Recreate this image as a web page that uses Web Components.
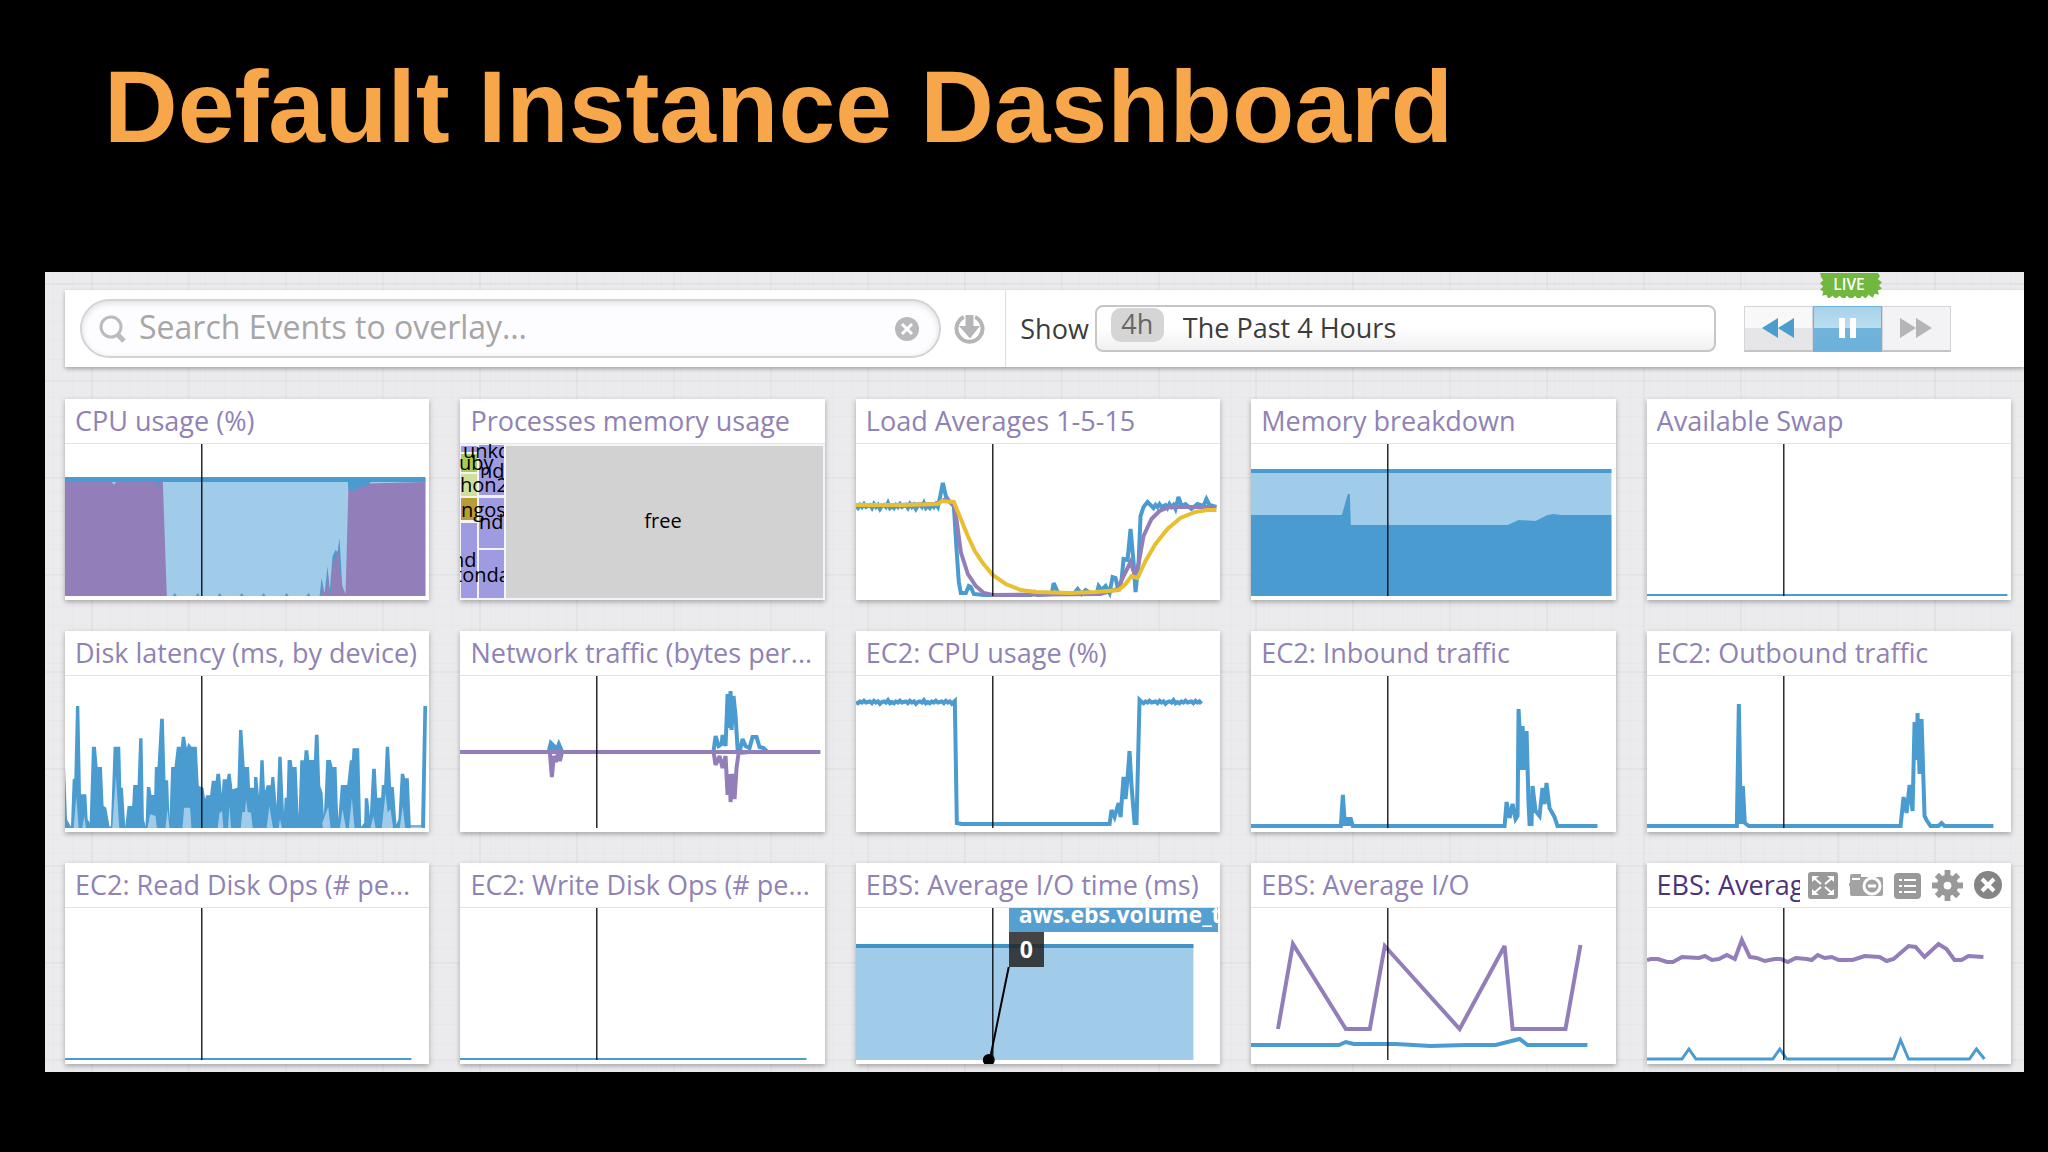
<!DOCTYPE html>
<html lang="en">
<head>
<meta charset="utf-8">
<title>Default Instance Dashboard</title>
<style>
body{
    margin: 0;
    background-color: #000;
    font-family: 'Open Sans', 'Noto Sans', sans-serif;
}
</style>
</head>
<body>
<dashboard-slide>
    <span slot="title">Default Instance Dashboard</span>
    <event-toolbar slot="toolbar"></event-toolbar>
    <graph-card heading="CPU usage (%)"><time-chart name="cpu"></time-chart></graph-card>
    <graph-card heading="Processes memory usage"><process-treemap></process-treemap></graph-card>
    <graph-card heading="Load Averages 1-5-15"><time-chart name="load"></time-chart></graph-card>
    <graph-card heading="Memory breakdown"><time-chart name="memory"></time-chart></graph-card>
    <graph-card heading="Available Swap"><time-chart name="swap"></time-chart></graph-card>
    <graph-card heading="Disk latency (ms, by device)"><time-chart name="disk"></time-chart></graph-card>
    <graph-card heading="Network traffic (bytes per..."><time-chart name="network"></time-chart></graph-card>
    <graph-card heading="EC2: CPU usage (%)"><time-chart name="ec2cpu"></time-chart></graph-card>
    <graph-card heading="EC2: Inbound traffic"><time-chart name="inbound"></time-chart></graph-card>
    <graph-card heading="EC2: Outbound traffic"><time-chart name="outbound"></time-chart></graph-card>
    <graph-card heading="EC2: Read Disk Ops (# pe..."><time-chart name="diskops"></time-chart></graph-card>
    <graph-card heading="EC2: Write Disk Ops (# pe..."><time-chart name="diskops"></time-chart></graph-card>
    <graph-card heading="EBS: Average I/O time (ms)">
        <time-chart name="iotime"><chart-tooltip metric="aws.ebs.volume_t" value="0"></chart-tooltip></time-chart>
    </graph-card>
    <graph-card heading="EBS: Average I/O"><time-chart name="io"></time-chart></graph-card>
    <graph-card heading="EBS: Averag" active><time-chart name="iosize"></time-chart></graph-card>
</dashboard-slide>

<script>
const BLUE = '#4a9bcf'
const LIGHT = '#a0ccea'
const PURPLE = '#927eb9'
const YELLOW = '#e8bf2f'

// small repeatable noise for the flat parts of a series
function noise(from, to, y, amp){
    const steps = [0, 2, -1, 1, -2, 1, 0, -1, 2, -2, 1, -1, 3, 0, -1, 1, -3, 2]
    let out = ''
    for(let x = from, i = 0; x <= to; x += 2, i++){
        out += `${x},${y + steps[i % steps.length] * amp} `
    }
    return out
}
function line(points, color, width = 4){
    return `<polyline points="${points}" fill="none" stroke="${color}" stroke-width="${width}" stroke-linejoin="miter" stroke-miterlimit="3"/>`
}
function area(points, color){
    return `<polygon points="${points}" fill="${color}"/>`
}

const charts = {
    cpu: {
        body: area('0,38 361,38 361,152 0,152', LIGHT)
            + area('255,152 257,134 260,150 263,122 265,150 268,112 271,106 273,108 275,94 278,148 280,152', BLUE)
            + area('0,38 98,38 102,152 0,152', PURPLE)
            + area('256,152 258,142 261,152 263,126 266,152 268,122 270,115 272,112 274,104 277,140 281,150 284,40 361,38 361,152', PURPLE)
            + area('283,34 361,34 361,38 306,38 303,42 294,43 291,47 284,46', BLUE)
            + area('0,33 361,33 361,38 0,38', BLUE)
            + area('47,38 51,38 49,41', LIGHT) + area('92,38 95,38 94,42', BLUE)
            + [110, 133, 155, 177, 199, 222, 244].map(x => area(`${x - 2},152 ${x},149 ${x + 2},152`, BLUE)).join('')
    },
    load: {
        body: line(noise(0, 82, 62, 1) + '84,54 87,39 90,52 94,58 98,62 101,110 103,138 105,149 110,149 113,142 115,143 118,150 128,151 175,151 179,148 182,151 196,150 198,139 202,148 206,150 218,150 222,145 226,150 230,146 236,150 241,150 243,142 246,146 250,142 254,149 257,133 260,134 263,147 266,136 268,115 272,116 275,85 278,118 280,148 283,120 285,72 288,63 292,58 ' + noise(296, 320, 62, 1) + '323,53 326,62 330,60 336,65 342,60 348,62 351,55 354,61 361,63', BLUE)
            + line('0,62 80,60 86,57 90,55 98,60 101,78 105,108 112,130 120,142 128,149 137,151 245,150 262,145 268,132 275,118 279,130 283,120 288,92 296,75 304,67 314,63 361,63', PURPLE)
            + line('0,61 50,61 82,60 86,57 98,58 105,75 112,92 119,107 127,119 137,131 150,140 165,146 180,148 215,149 240,148 263,146 270,140 276,132 282,134 290,117 300,100 312,85 325,74 340,68 352,66 361,66', YELLOW)
    },
    memory: {
        body: area('0,25 361,25 361,152 0,152', LIGHT)
            + area('0,25 361,25 361,29 0,29', BLUE)
            + area('0,71 91,71 97,50 99,50 100,81 257,81 268,76 285,77 297,71 303,70 310,71 361,71 361,152 0,152', BLUE)
    },
    swap: { body: line('0,151 361,151', BLUE, 2) },
    disk: {
        view: '44 170 1095 468',
        body: area('44,440 50,600 62,622 67,480 72,478 77,260 87,260 92,525 108,525 112,600 118,610 125,382 137,382 142,443 155,443 160,560 168,565 178,622 182,620 190,382 210,382 213,505 218,505 225,622 232,560 246,560 249,497 262,497 267,357 277,357 281,600 286,620 290,503 300,503 304,527 312,527 314,443 322,443 330,298 341,298 346,483 354,483 358,600 363,443 373,443 380,382 392,382 395,352 405,352 410,385 415,370 424,382 440,382 446,500 460,505 465,540 468,528 480,528 485,484 497,484 499,463 510,463 515,525 518,480 530,480 533,463 542,463 547,510 562,505 567,332 577,332 584,443 597,443 600,505 612,505 612,473 622,473 627,530 631,423 641,423 645,515 650,498 662,498 664,473 673,473 680,560 685,412 695,412 702,580 704,535 710,535 713,422 725,422 728,443 740,443 746,590 751,423 762,423 764,393 775,393 778,422 792,422 795,346 806,346 811,500 818,520 822,590 829,422 843,422 848,443 860,443 865,600 873,497 892,497 900,423 906,423 908,387 928,387 934,622 943,610 945,537 955,537 960,590 967,448 978,448 982,535 994,535 996,497 1003,497 1008,382 1018,382 1024,503 1032,503 1040,615 1046,600 1053,463 1063,463 1066,477 1077,477 1083,618 1114,618 1121,260 1132,260 1126,626 44,626', BLUE)
            + area('70,626 78,530 85,626', LIGHT) + area('96,626 102,590 107,626', LIGHT)
            + area('186,626 197,470 207,626', LIGHT) + area('292,626 300,585 316,590 320,626', LIGHT)
            + area('346,626 352,570 358,626', LIGHT) + area('397,626 402,565 420,565 424,626', LIGHT)
            + area('503,626 508,582 516,575 520,626', LIGHT) + area('534,626 538,558 543,626', LIGHT)
            + area('572,626 577,578 585,578 588,540 593,578 603,580 608,626', LIGHT)
            + area('650,626 658,560 669,626', LIGHT) + area('686,626 690,600 696,626', LIGHT)
            + area('817,612 835,562 842,626 819,626', LIGHT) + area('870,626 878,570 888,626', LIGHT)
            + area('897,626 906,535 914,626', LIGHT) + area('962,626 971,590 977,626', LIGHT)
            + area('996,626 1007,520 1014,580 1022,568 1030,626', LIGHT) + area('1050,626 1059,560 1066,626', LIGHT)
            + line('1083,624 1115,624', LIGHT, 5)
    },
    network: {
        body: area('89,75 91,67 94,70 97,73 99,67 102,75', BLUE)
            + line('89,75 91,67 94,70 97,73 99,68 102,75', BLUE)
            + line('254,75 256,60 259,70 262,68 263,59 266,70 268,18 269,52 271,15 272,54 274,20 276,40 278,72 281,72 283,63 286,70 290,72 293,61 297,61 300,71 304,72 308,76', BLUE)
            + line('90,76 92,101 94,80 96,86 98,78 100,85 102,77', PURPLE)
            + line('254,76 256,89 260,80 263,92 266,80 268,119 270,98 271,126 273,98 275,123 277,92 279,77 290,76', PURPLE)
            + line('0,76 361,76', PURPLE)
    },
    ec2cpu: {
        body: line(noise(0, 97, 26, .6) + '99,25 101,147 106,148 254,148 256,134 259,141 263,127 265,141 268,101 270,123 272,102 274,75 276,110 279,147 281,147 284,24 ' + noise(286, 347, 26, .6), BLUE)
    },
    inbound: {
        body: area('90,150 92,120 95,143 100,143 103,150', BLUE)
            + line('0,150 90,150 92,119 94,148 96,143 100,143 102,150 254,150 256,126 259,142 262,128 265,143 267,140 268,33 271,94 272,50 274,94 276,55 278,128 279,148 281,148 282,110 285,135 289,140 292,112 294,128 296,107 299,132 304,141 307,150 347,150', BLUE)
    },
    outbound: {
        body: line('0,150 90,150 92,28 94,148 96,110 98,147 102,150 254,150 257,121 260,137 263,109 266,135 268,46 270,84 271,37 273,98 275,43 278,140 280,144 284,150 292,150 295,147 298,150 347,150', BLUE)
    },
    diskops: { body: line('0,151 347,151', BLUE, 2) },
    iotime: {
        body: area('0,37 338,37 338,152 0,152', LIGHT) + line('0,38 338,38', '#4292c4')
            + line('153,59 134,152', '#000', 2) + '<circle cx="133" cy="152" r="6" fill="#000"/>'
    },
    io: {
        body: line('27,121 42,36 95,121 119,121 134,38 209,121 254,38 262,121 315,121 330,37', PURPLE)
            + line('0,137 88,137 95,134 103,136 145,136 180,138 215,137 245,137 269,131 277,137 337,137', BLUE)
    },
    iosize: {
        body: line('0,52 4,51 11,51 20,54 26,54 35,49 52,50 58,48 65,52 72,51 80,47 88,51 95,32 103,49 110,50 118,53 128,51 134,51 141,54 149,50 160,51 165,52 171,47 178,50 185,49 192,52 206,52 218,48 233,49 240,53 247,51 262,38 269,39 278,49 292,36 300,41 308,52 315,52 322,48 337,49', PURPLE)
            + line('0,151 35,151 42,141 49,151 126,151 133,141 140,151 247,151 254,132 262,151 323,151 330,141 338,151', BLUE, 3)
    }
}

class TimeChart extends HTMLElement{
    constructor(){
        super()
        this._shadowDom = this.attachShadow({mode: 'open'})
    }
    connectedCallback(){
        const chart = charts[this.getAttribute('name')]
        this._shadowDom.innerHTML = `
        <style>
        :host{
            display: block;
            position: relative;
            height: 156px;
            overflow: hidden;
        }
        svg{
            position: absolute;
            width: 100%;
            height: 100%;
        }
        </style>
        <svg viewBox="${chart.view || '0 0 365 156'}" preserveAspectRatio="none" aria-hidden="true">${chart.body}</svg>
        <svg viewBox="0 0 365 156" preserveAspectRatio="none" aria-hidden="true"><path d="M137 0V152" stroke="#000" stroke-opacity=".85" stroke-width="1.5"/></svg>
        <slot></slot>
        `
    }
}

class ChartTooltip extends HTMLElement{
    constructor(){
        super()
        this._shadowDom = this.attachShadow({mode: 'open'})
    }
    connectedCallback(){
        this._shadowDom.innerHTML = `
        <style>
        :host{
            position: absolute;
            top: 0;
            left: 42%;
            right: 2px;
            color: #fff;
            font-weight: 700;
            font-size: 23px;
        }
        .metric{
            height: 24px;
            line-height: 13px;
            padding-left: 10px;
            background-color: #569fd1;
            white-space: nowrap;
            overflow: hidden;
        }
        .value{
            width: 35px;
            line-height: 35px;
            text-align: center;
            background-color: rgba(35, 35, 35, .85);
        }
        </style>
        <div class="metric">${this.getAttribute('metric')}</div>
        <div class="value">${this.getAttribute('value')}</div>
        `
    }
}

class ProcessTreemap extends HTMLElement{
    constructor(){
        super()
        this._shadowDom = this.attachShadow({mode: 'open'})
    }
    connectedCallback(){
        this._shadowDom.innerHTML = `
        <style>
        :host{
            display: block;
            height: 156px;
            padding-right: 2px;
            background-color: #f4f3fa;
        }
        .map{
            display: block;
            width: 100%;
            height: 100%;
            font-size: 20px;
        }
        </style>
        <svg class="map">
            <rect x="46" y="2" width="100%" height="152" fill="#d3d2d3"/>
            <text x="56%" y="84" text-anchor="middle">free</text>
            <svg width="44" height="156">
                <g fill="#9f9be0">
                    <rect x="1" y="2" width="16" height="6"/>
                    <rect x="1" y="79" width="16" height="75"/>
                    <rect x="19" y="1" width="25" height="50"/>
                    <rect x="19" y="54" width="25" height="50"/>
                    <rect x="19" y="106" width="25" height="48"/>
                </g>
                <rect x="1" y="10" width="16" height="18" fill="#a9cb58"/>
                <rect x="1" y="30" width="16" height="22" fill="#cfdf9c"/>
                <rect x="1" y="54" width="16" height="22" fill="#b99c33"/>
                <text x="3" y="14">unkd</text>
                <text x="-1" y="26">uby</text>
                <text x="20" y="34">nda</text>
                <text x="0" y="48">hon2</text>
                <text x="1" y="73">ngos</text>
                <text x="19" y="85">nda</text>
                <text x="-8" y="123">nd</text>
                <text x="-5" y="138">tonda</text>
            </svg>
        </svg>
        `
    }
}

const tools = `
<div class="tools">
    <button aria-label="Full screen"><svg width="30" height="27" viewBox="0 0 30 27">
        <rect width="30" height="27" rx="3" fill="#999"/>
        <g stroke="#fff" stroke-width="2"><path d="M6 6l7 6M24 6l-7 6M6 21l7-6M24 21l-7-6"/></g>
        <path d="M4 4h7l-7 6zM26 4h-7l7 6zM4 23h7l-7-6zM26 23h-7l7-6z" fill="#fff"/>
    </svg></button>
    <button aria-label="Snapshot"><svg width="34" height="27" viewBox="0 0 34 27">
        <path d="M3 2h9v3h20q2 0 2 2v15q0 2-2 2H3q-2 0-2-2v-8H0v-3h1V4q0-2 2-2z" fill="#a3a3a3"/>
        <path d="M3 7h8" stroke="#fff" stroke-width="2"/>
        <circle cx="23" cy="14" r="8" fill="none" stroke="#fff" stroke-width="3"/>
        <path d="M19 14h8" stroke="#fff" stroke-width="3"/>
    </svg></button>
    <button aria-label="Legend"><svg width="27" height="27" viewBox="0 0 27 27">
        <rect y="1" width="27" height="26" rx="4" fill="#999"/>
        <path d="M5 8h3M5 14h3M5 20h3M10 8h12M10 14h12M10 20h12" stroke="#fff" stroke-width="2"/>
    </svg></button>
    <button aria-label="Settings"><svg width="31" height="31" viewBox="-16 -16 32 32">
        <g stroke="#999" stroke-width="6"><path d="M0-16V16M-16 0H16M-11-11L11 11M-11 11L11-11"/></g>
        <circle r="11" fill="#999"/><circle r="4" fill="#fff"/>
    </svg></button>
    <button aria-label="Close"><svg width="28" height="28" viewBox="0 0 28 28">
        <circle cx="14" cy="14" r="14" fill="#858585"/>
        <path d="M8 8l12 12M20 8L8 20" stroke="#fff" stroke-width="4"/>
    </svg></button>
</div>`

class GraphCard extends HTMLElement{
    constructor(){
        super()
        this._shadowDom = this.attachShadow({mode: 'open'})
    }
    connectedCallback(){
        this._shadowDom.innerHTML = `
        <style>
        :host{
            display: block;
            min-width: 0;
            background-color: #fff;
            box-shadow: 0 2px 5px rgba(0, 0, 0, .3);
        }
        .head{
            display: flex;
            align-items: center;
            height: 45px;
            padding: 0 9px 0 10px;
            border-bottom: 1px solid #e4e2e8;
            box-sizing: border-box;
        }
        h2{
            flex: 1;
            margin: 0;
            min-width: 0;
            font-size: 27px;
            font-weight: 400;
            line-height: 44px;
            color: #8f82b4;
            white-space: nowrap;
            overflow: hidden;
        }
        :host([active]) h2{
            color: #4b3379;
        }
        .tools{
            display: flex;
            align-items: center;
            gap: 11px;
            padding-left: 8px;
        }
        button{
            display: block;
            padding: 0;
            border: 0;
            background: none;
            cursor: pointer;
        }
        svg{
            display: block;
        }
        </style>
        <div class="head"><h2>${this.getAttribute('heading')}</h2>${this.hasAttribute('active') ? tools : ''}</div>
        <slot></slot>
        `
    }
}

class EventToolbar extends HTMLElement{
    constructor(){
        super()
        this._shadowDom = this.attachShadow({mode: 'open'})
    }
    connectedCallback(){
        this._shadowDom.innerHTML = `
        <style>
        :host{
            display: flex;
            height: 77px;
            background-color: #fff;
            box-shadow: 0 2px 4px rgba(0, 0, 0, .3);
        }
        *{
            box-sizing: border-box;
        }
        svg{
            display: block;
        }
        button{
            padding: 0;
            border: 0;
            background: none;
            font: inherit;
        }
        .events{
            flex: 0 0 48%;
            display: flex;
            align-items: center;
            gap: 13px;
            padding: 0 20px 0 15px;
        }
        .search{
            flex: 1;
            display: flex;
            align-items: center;
            gap: 13px;
            height: 59px;
            padding: 0 20px 0 17px;
            border: 2px solid #d3d3d5;
            border-radius: 30px;
            background-color: #fdfcfe;
            box-shadow: inset 0 2px 6px rgba(0, 0, 0, .12);
        }
        input{
            flex: 1;
            min-width: 0;
            padding: 0 0 4px;
            border: 0;
            outline: none;
            background: none;
            font: 32px 'Open Sans', sans-serif;
            color: #555;
        }
        input::placeholder{
            color: #a6a6a6;
            opacity: 1;
        }
        .range{
            flex: 1;
            display: flex;
            align-items: center;
            padding: 0 73px 0 14px;
            border-left: 1px solid #ddd;
            font-size: 27px;
            color: #3c3c3c;
        }
        label{
            margin-right: 6px;
        }
        .picker{
            flex: 1;
            display: grid;
            align-items: center;
            height: 47px;
        }
        .picker > *{
            grid-area: 1 / 1;
        }
        select{
            appearance: none;
            width: 100%;
            height: 47px;
            padding: 0 0 3px 86px;
            border: 2px solid #c6c5c8;
            border-radius: 8px;
            background: linear-gradient(#fff 50%, #f0eff1);
            font: 27px 'Open Sans', sans-serif;
            color: #3c3c3c;
        }
        .badge{
            z-index: 1;
            justify-self: start;
            align-self: start;
            width: 53px;
            height: 34px;
            margin: 3px 0 0 16px;
            line-height: 32px;
            text-align: center;
            border-radius: 10px;
            background-color: #d6d5d6;
            color: #666;
            pointer-events: none;
        }
        .playback{
            position: relative;
            display: flex;
            margin-left: 28px;
        }
        .playback button{
            display: grid;
            place-items: center;
            width: 69px;
            height: 46px;
            border: 1px solid #d5d4d6;
            border-bottom: 2px solid #c4c3c5;
            background: linear-gradient(#f8f8f9 50%, #e6e5e8 50%);
        }
        .playback .pause{
            border-color: #6fb2da;
            background: linear-gradient(#a6d2ea, #bcdef0 50%, #70b4dc 50%, #6db1da);
        }
        .playback .forward{
            background: #f3f2f4;
        }
        .live{
            position: absolute;
            top: -33px;
            left: 72px;
        }
        </style>
        <div class="events">
            <div class="search">
                <svg width="27" height="28" viewBox="0 0 27 28" fill="none" stroke="#bbb">
                    <circle cx="12" cy="12" r="10" stroke-width="3"/><path d="M18 19l7 7" stroke-width="5"/>
                </svg>
                <input type="search" aria-label="Search Events to overlay" placeholder="Search Events to overlay…">
                <button aria-label="Clear"><svg width="24" height="24" viewBox="0 0 24 24">
                    <circle cx="12" cy="12" r="12" fill="#b9b9bb"/><path d="M7 7l10 10M17 7L7 17" stroke="#fff" stroke-width="3"/>
                </svg></button>
            </div>
            <button aria-label="Show events"><svg width="31" height="30" viewBox="0 0 31 30">
                <path d="M10 3A13 13 0 1 0 21 3" fill="none" stroke="#b5b5b7" stroke-width="4"/>
                <path d="M11 1h9v11h6L16 25 5 12h6z" fill="#b5b5b7"/>
                <path d="M11 0v12M20 0v12M6 14l10 11 9-11" fill="none" stroke="#fff" stroke-width="1"/>
            </svg></button>
        </div>
        <div class="range">
            <label for="span">Show</label>
            <div class="picker">
                <span class="badge">4h</span>
                <select id="span"><option>The Past 4 Hours</option></select>
            </div>
            <div class="playback">
                <button aria-label="Back"><svg width="33" height="20" viewBox="0 0 33 20"><path d="M0 10L16 0v20zM16 10L32 0v20z" fill="#4b9dcd"/></svg></button>
                <button class="pause" aria-label="Pause"><svg width="17" height="20" viewBox="0 0 17 20"><path d="M0 0h6v20H0zM11 0h6v20h-6z" fill="#fff"/></svg></button>
                <button class="forward" aria-label="Forward" disabled><svg width="33" height="20" viewBox="0 0 33 20"><path d="M0 0l16 10L0 20zM16 0l16 10-16 10z" fill="#b5b5b7"/></svg></button>
                <svg class="live" width="66" height="25" viewBox="0 0 64 25" preserveAspectRatio="xMidYMin slice">
                    <path d="M4 0h56l2 3-2 3 4 3-3 3 3 3-4 2 1 4-4-1-2 4-4-3-3 4-3-3-4 4-3-4-4 4-4-4-3 4-4-4-4 3-3-3-4 3-2-4-4 1 1-4-3-2 3-3-3-3 3-3-2-3z" fill="#72b73e"/>
                    <text x="32" y="16" text-anchor="middle" font-size="15" font-weight="600" fill="#fff">LIVE</text>
                </svg>
            </div>
        </div>
        `
    }
}

class DashboardSlide extends HTMLElement{
    constructor(){
        super()
        this._shadowDom = this.attachShadow({mode: 'open'})
    }
    connectedCallback(){
        this._shadowDom.innerHTML = `
        <style>
        :host{
            display: block;
            padding: 56px 24px 80px 45px;
        }
        h1{
            margin: 0 0 114px 59px;
            font: 700 102px/102px 'Liberation Sans', Arial, sans-serif;
            color: #f7a64a;
        }
        .panel{
            padding: 18px 0 8px 20px;
            background-color: #ebeaec;
            background-image:
                linear-gradient(90deg, rgba(0, 0, 0, .03) 2px, transparent 2px),
                linear-gradient(rgba(0, 0, 0, .03) 2px, transparent 2px),
                linear-gradient(90deg, rgba(0, 0, 0, .01) 1px, transparent 1px),
                linear-gradient(rgba(0, 0, 0, .01) 1px, transparent 1px);
            background-size: 97px 97px, 97px 97px, 19px 19px, 19px 19px;
            background-position: 46px 11px;
        }
        .grid{
            display: grid;
            grid-template-columns: repeat(5, minmax(0, 1fr));
            gap: 31px;
            margin: 32px 13px 0 0;
        }
        </style>
        <h1><slot name="title"></slot></h1>
        <main class="panel">
            <slot name="toolbar"></slot>
            <div class="grid"><slot></slot></div>
        </main>
        `
    }
}

window.customElements.define('time-chart', TimeChart)
window.customElements.define('chart-tooltip', ChartTooltip)
window.customElements.define('process-treemap', ProcessTreemap)
window.customElements.define('graph-card', GraphCard)
window.customElements.define('event-toolbar', EventToolbar)
window.customElements.define('dashboard-slide', DashboardSlide)
</script>
</body>
</html>
